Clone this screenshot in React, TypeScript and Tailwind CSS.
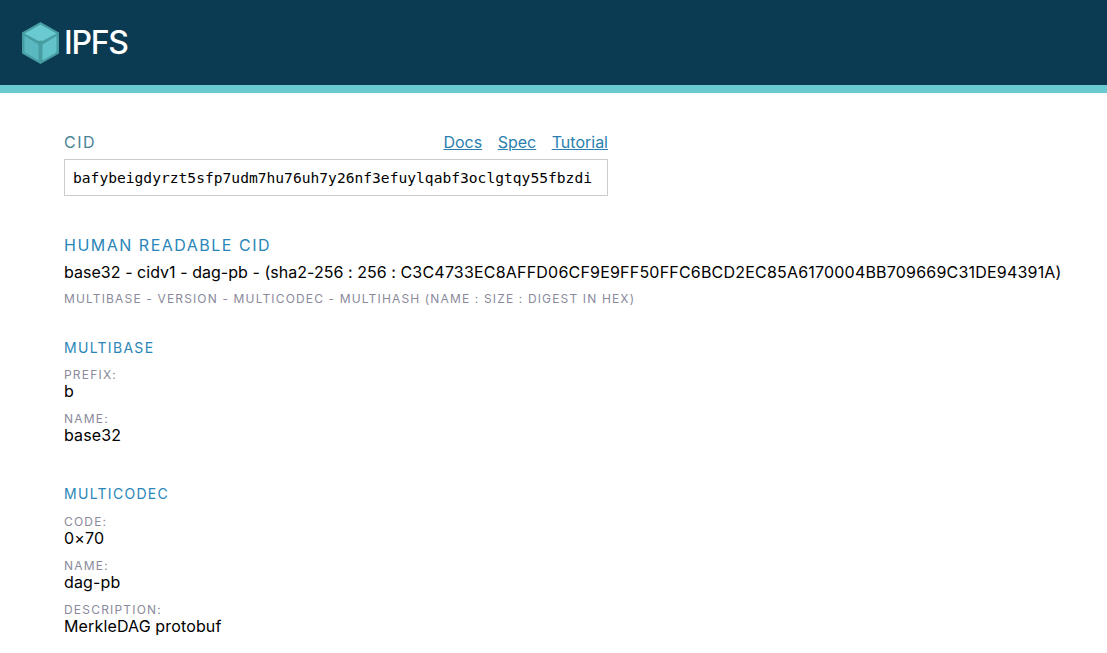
const inter = 'font-["Inter","Noto_Sans",sans-serif]';

type FieldProps = {
  label: string;
  value: string;
};

function Field({ label, value }: FieldProps) {
  return (
    <div className="mb-[10px]">
      <div className="h-[14px] text-[12px] leading-[14px] tracking-[1.2px] text-[#8a8a9c] uppercase">
        {label}
      </div>
      <div className="-mt-[2px] h-[22px] text-[16px] leading-[22px] tracking-[0.14px] text-[#000]">
        {value}
      </div>
    </div>
  );
}

function SectionTitle({ children }: { children: string }) {
  return (
    <h2 className="text-[14px] leading-[20px] font-normal tracking-[1.3px] text-[#2a86b8] uppercase">
      {children}
    </h2>
  );
}

function CubeLogo() {
  return (
    <svg width="37" height="42" viewBox="0 0 37 42" className="shrink-0">
      <path d="M18.5 0 L37 10.5 V31.5 L18.5 42 L0 31.5 V10.5 Z" fill="#469ea2" />
      <path d="M18.5 2.5 L34.5 11.5 L18.5 20 L2.5 11.5 Z" fill="#6acad1" />
      <path d="M2.5 14 L16.5 22.5 V38.5 L2.5 30.3 Z" fill="#5ab9c0" />
      <path d="M34.5 14 V30.3 L20.5 38.5 V22.5 Z" fill="#62c3ca" />
      <circle cx="18.5" cy="21" r="2.5" fill="#469ea2" />
    </svg>
  );
}

export default function App() {
  return (
    <div className={`min-h-[653px] bg-white ${inter}`}>
      <header className="flex h-[93px] items-start border-b-[8px] border-[#6acad1] bg-[#0b3a53] pt-[22px] pl-[22px]">
        <CubeLogo />
        <span className="ml-[5px] text-[32px] leading-[42px] font-medium tracking-[-1.3px] text-white">IPFS</span>
      </header>

      <main className="pt-[39px] pl-[64px]">
        <section className="w-[544px]">
          <div className="flex h-[20px] items-center justify-between">
            <span className="text-[16px] tracking-[1.45px] text-[#4a8296] uppercase">CID</span>
            <nav className="flex gap-[15.5px] text-[16px] text-[#2a7fae]">
              <a className="underline" href="#">Docs</a>
              <a className="underline" href="#">Spec</a>
              <a className="underline" href="#">Tutorial</a>
            </nav>
          </div>
          <div className="mt-[7px] flex h-[37px] items-center border border-[#cccccc] pl-[8px] font-['DejaVu_Sans_Mono',monospace] text-[14.6px] tracking-[0.01px] text-black">
            bafybeigdyrzt5sfp7udm7hu76uh7y26nf3efuylqabf3oclgtqy55fbzdi
          </div>
        </section>

        <section className="mt-[38px]">
          <h2 className="text-[16px] leading-[22px] font-normal tracking-[1.5px] text-[#2a86b8] uppercase">
            Human readable CID
          </h2>
          <div className="mt-[5px] text-[16px] leading-[22px] tracking-[0.04px] whitespace-nowrap text-black">
            base32 - cidv1 - dag-pb - (sha2-256 : 256 :{' '}
            <span className="tracking-[0.2px]">C3C4733EC8AFFD06CF9E9FF50FFC6BCD2EC85A6170004BB709669C31DE94391A)</span>
          </div>
          <div className="mt-[8px] text-[12px] leading-[16px] tracking-[1.15px] whitespace-nowrap text-[#8a8a9c] uppercase">
            multibase - version - multicodec - multihash (name : size : digest in hex)
          </div>
        </section>

        <section className="mt-[31px]">
          <SectionTitle>Multibase</SectionTitle>
          <div className="mt-[10px]">
            <Field label="Prefix:" value="b" />
            <Field label="Name:" value="base32" />
          </div>
        </section>

        <section className="mt-[38px]">
          <SectionTitle>Multicodec</SectionTitle>
          <div className="mt-[11px]">
            <Field label="Code:" value="0×70" />
            <Field label="Name:" value="dag-pb" />
            <Field label="Description:" value="MerkleDAG protobuf" />
          </div>
        </section>
      </main>
    </div>
  );
}
